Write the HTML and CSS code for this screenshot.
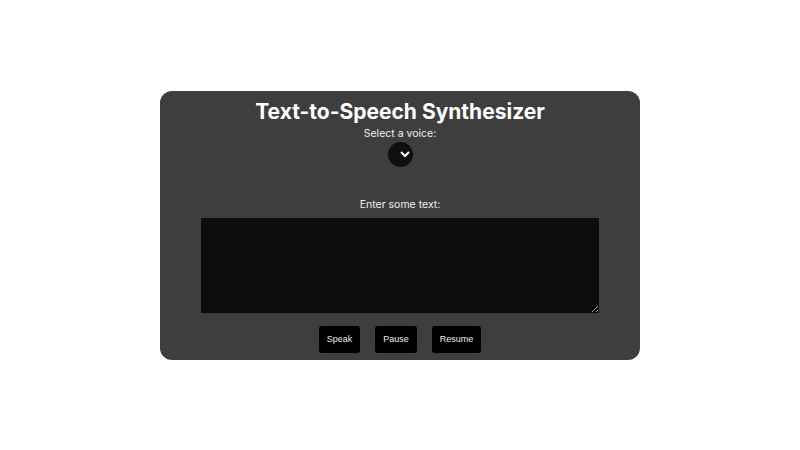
FILE: index.html
```html
<!DOCTYPE html>
<html lang="en">
<head>
    <meta charset="UTF-8">
    <meta name="viewport" content="width=device-width, initial-scale=1.0">
    <title>Text-to-Speech Synthesizer</title>
    <link rel="stylesheet" href="styles.css">
</head>
<body>
    <div class="container">
        <h1>Text-to-Speech Synthesizer</h1>
        <label for="voiceSelect">Select a voice:</label>
        <select id="voiceSelect"></select>

        <label for="text" class="text-label">Enter some text:</label>
        <textarea id="text"></textarea>

        <div class="buttons">
            <button id="speak">Speak</button>
            <button id="pause">Pause</button>
            <button id="resume">Resume</button>
        </div>
    </div>
</body>
</html>
```

FILE: styles.css
```css
body {
    margin: 0;
    min-height: 100vh;
    display: flex;
    align-items: center;
    justify-content: center;
    background-color: #fff;
    font-family: "Inter", "Noto Sans", sans-serif;
}

.container {
    width: 480px;
    box-sizing: border-box;
    padding: 7px 41px 7px;
    background-color: #3e3e3e;
    border-radius: 12px;
    color: #fff;
    display: flex;
    flex-direction: column;
    align-items: center;
}

    .container h1 {
        margin: 0;
        font-size: 21px;
        font-weight: 700;
        line-height: 28px;
    }

    .container label {
        font-size: 10.5px;
        line-height: 16px;
        color: #eee;
    }

#voiceSelect {
    width: 25px;
    height: 25px;
    border: none;
    border-radius: 50%;
    background-color: #0f0f0f;
    color: #fff;
    font-size: 8px;
}

.text-label {
    margin-top: 30px;
}

textarea {
    width: 100%;
    height: 95px;
    box-sizing: border-box;
    margin-top: 5px;
    border: none;
    background-color: #0d0d0d;
    color: #fff;
}

.buttons {
    display: flex;
    gap: 15px;
    margin-top: 13px;
}

    .buttons button {
        height: 27px;
        padding: 0 8px;
        border: none;
        border-radius: 3px;
        background-color: #000;
        color: #eee;
        font-family: "Liberation Sans", Arial, sans-serif;
        font-size: 9px;
    }
```
